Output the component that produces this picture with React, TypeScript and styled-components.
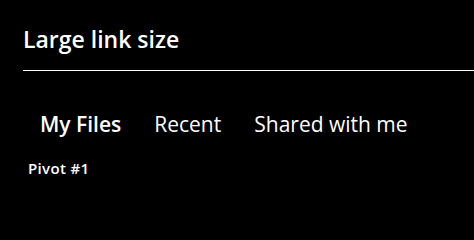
import React from "react";
import styled, { createGlobalStyle } from "styled-components";

const Global = createGlobalStyle`
  html, body { margin: 0; padding: 0; background: #000; }
  body { font-family: "Open Sans", "Noto Sans", sans-serif; color: #fff; }
`;

const Page = styled.div`
  width: 474px;
  height: 206px;
  background: #000;
  overflow: hidden;
  padding-left: 23px;
  box-sizing: border-box;
`;

const Header = styled.div`
  padding: 24px 0 16px;
  border-bottom: 1px solid #fff;
`;

const Title = styled.h2`
  margin: 0;
  font-size: 23px;
  font-weight: 600;
  line-height: 30px;
`;

const Tabs = styled.div`
  display: flex;
  margin-top: 33px;
  padding-left: 7px;
`;

const Tab = styled.button<{ $selected?: boolean }>`
  background: transparent;
  border: none;
  color: #fff;
  font-family: inherit;
  font-size: 21px;
  font-weight: ${(p) => (p.$selected ? 600 : 400)};
  line-height: 40px;
  padding: 0 10px;
  margin: 0 13px 0 0;
  cursor: pointer;
`;

const Content = styled.div`
  margin-top: 14px;
  padding-left: 5px;
  font-size: 15px;
  font-weight: 600;
  letter-spacing: 0.35px;
  line-height: 20px;
`;

export default function App() {
  return (
    <Page>
      <Global />
      <Header>
        <Title>Large link size</Title>
      </Header>
      <Tabs>
        <Tab $selected>My Files</Tab>
        <Tab>Recent</Tab>
        <Tab>Shared with me</Tab>
      </Tabs>
      <Content>Pivot #1</Content>
    </Page>
  );
}
